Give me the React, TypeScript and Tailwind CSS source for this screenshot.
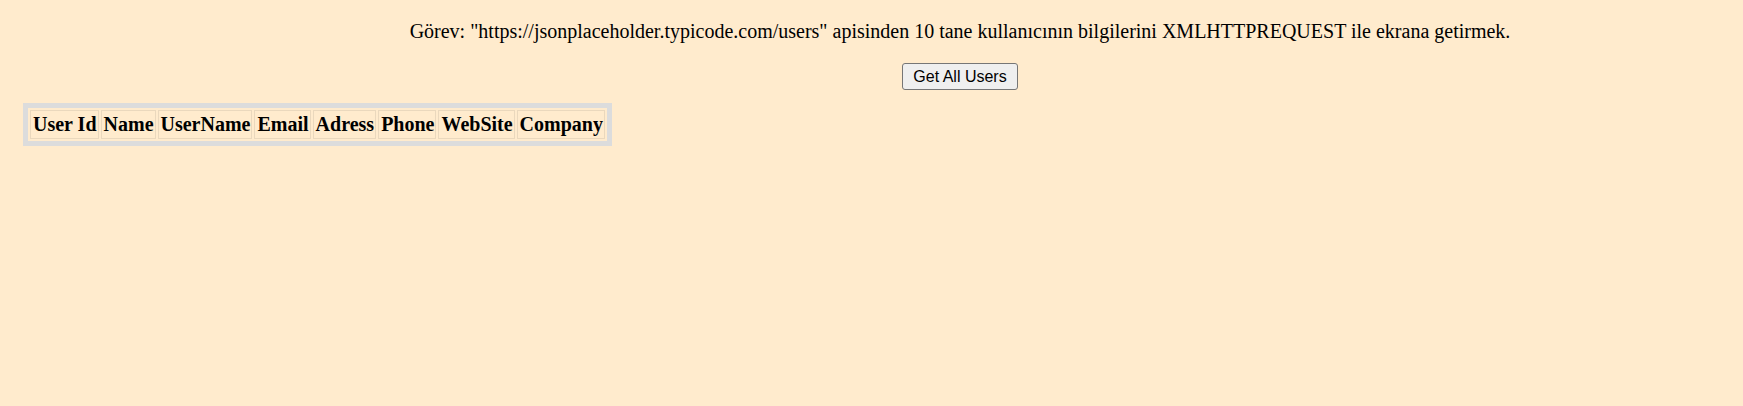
import React from 'react';

const headers = ['User Id', 'Name', 'UserName', 'Email', 'Adress', 'Phone', 'WebSite', 'Company'];

const App: React.FC = () => {
  return (
    <div className="min-h-[406px] w-full overflow-hidden bg-[#ffebcd] pb-4 font-['Liberation_Serif',serif] text-black">
      <div className="pl-[177px] text-center">
        <p className="pt-[20px] text-[20px] leading-[23px]">
          Görev: "https://jsonplaceholder.typicode.com/users" apisinden 10 tane kullanıcının bilgilerini XMLHTTPREQUEST ile ekrana getirmek.
        </p>
        <button className="mt-[20px] h-[27px] rounded-[3px] border border-[#767676] bg-[#efefef] px-[10px] font-['Liberation_Sans',Arial,sans-serif] text-[16px] leading-[18px] text-black">
          Get All Users
        </button>
      </div>

      <table className="ml-[23px] mt-[13px] border-separate border-spacing-[2px] border-[5px] border-[#dcdcdc]">
        <thead>
          <tr>
            {headers.map((h) => (
              <th
                key={h}
                className="border border-[#ead8bd] pl-[2px] pr-px py-[2px] text-[20px] font-bold leading-[23px] whitespace-nowrap"
              >
                {h}
              </th>
            ))}
          </tr>
        </thead>
        <tbody></tbody>
      </table>
    </div>
  );
};

export default App;
